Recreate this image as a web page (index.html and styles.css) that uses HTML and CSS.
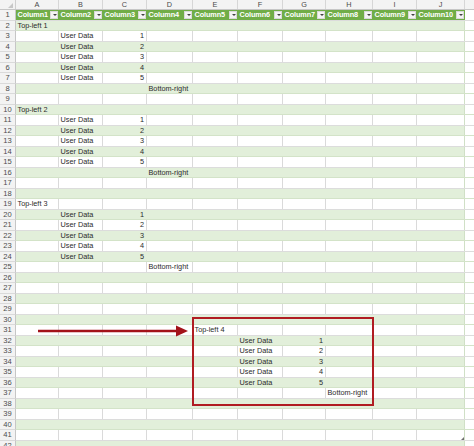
FILE: index.html
```html
<!DOCTYPE html>
<html>
<head>
<meta charset="utf-8">
<link rel="stylesheet" href="styles.css">
</head>
<body>
<div class="sheet">
  <div class="colhead">
    <div class="corner"><span class="tri"></span></div>
    <div class="ch">A</div><div class="ch">B</div><div class="ch">C</div><div class="ch">D</div><div class="ch">E</div>
    <div class="ch">F</div><div class="ch">G</div><div class="ch">H</div><div class="ch">I</div><div class="ch">J</div>
    <div class="ch last"></div>
  </div>
  <div class="row thead">
    <div class="rh">1</div>
    <div class="th"><span>Column1</span><span class="dd"></span></div>
    <div class="th"><span>Column2</span><span class="dd"></span></div>
    <div class="th"><span>Column3</span><span class="dd"></span></div>
    <div class="th"><span>Column4</span><span class="dd"></span></div>
    <div class="th"><span>Column5</span><span class="dd"></span></div>
    <div class="th"><span>Column6</span><span class="dd"></span></div>
    <div class="th"><span>Column7</span><span class="dd"></span></div>
    <div class="th"><span>Column8</span><span class="dd"></span></div>
    <div class="th"><span>Column9</span><span class="dd"></span></div>
    <div class="th"><span>Column10</span><span class="dd"></span></div>
  </div>
  <div class="row band"><div class="rh">2</div><div class="t a">Top-left 1</div></div>
  <div class="row"><div class="rh">3</div><div class="t b">User Data</div><div class="n c">1</div></div>
  <div class="row band"><div class="rh">4</div><div class="t b">User Data</div><div class="n c">2</div></div>
  <div class="row"><div class="rh">5</div><div class="t b">User Data</div><div class="n c">3</div></div>
  <div class="row band"><div class="rh">6</div><div class="t b">User Data</div><div class="n c">4</div></div>
  <div class="row"><div class="rh">7</div><div class="t b">User Data</div><div class="n c">5</div></div>
  <div class="row band"><div class="rh">8</div><div class="t d">Bottom-right</div></div>
  <div class="row"><div class="rh">9</div></div>
  <div class="row band"><div class="rh">10</div><div class="t a">Top-left 2</div></div>
  <div class="row"><div class="rh">11</div><div class="t b">User Data</div><div class="n c">1</div></div>
  <div class="row band"><div class="rh">12</div><div class="t b">User Data</div><div class="n c">2</div></div>
  <div class="row"><div class="rh">13</div><div class="t b">User Data</div><div class="n c">3</div></div>
  <div class="row band"><div class="rh">14</div><div class="t b">User Data</div><div class="n c">4</div></div>
  <div class="row"><div class="rh">15</div><div class="t b">User Data</div><div class="n c">5</div></div>
  <div class="row band"><div class="rh">16</div><div class="t d">Bottom-right</div></div>
  <div class="row"><div class="rh">17</div></div>
  <div class="row band"><div class="rh">18</div></div>
  <div class="row"><div class="rh">19</div><div class="t a">Top-left 3</div></div>
  <div class="row band"><div class="rh">20</div><div class="t b">User Data</div><div class="n c">1</div></div>
  <div class="row"><div class="rh">21</div><div class="t b">User Data</div><div class="n c">2</div></div>
  <div class="row band"><div class="rh">22</div><div class="t b">User Data</div><div class="n c">3</div></div>
  <div class="row"><div class="rh">23</div><div class="t b">User Data</div><div class="n c">4</div></div>
  <div class="row band"><div class="rh">24</div><div class="t b">User Data</div><div class="n c">5</div></div>
  <div class="row"><div class="rh">25</div><div class="t d">Bottom-right</div></div>
  <div class="row band"><div class="rh">26</div></div>
  <div class="row"><div class="rh">27</div></div>
  <div class="row band"><div class="rh">28</div></div>
  <div class="row"><div class="rh">29</div></div>
  <div class="row band"><div class="rh">30</div></div>
  <div class="row"><div class="rh">31</div><div class="t e">Top-left 4</div></div>
  <div class="row band"><div class="rh">32</div><div class="t f">User Data</div><div class="n g">1</div></div>
  <div class="row"><div class="rh">33</div><div class="t f">User Data</div><div class="n g">2</div></div>
  <div class="row band"><div class="rh">34</div><div class="t f">User Data</div><div class="n g">3</div></div>
  <div class="row"><div class="rh">35</div><div class="t f">User Data</div><div class="n g">4</div></div>
  <div class="row band"><div class="rh">36</div><div class="t f">User Data</div><div class="n g">5</div></div>
  <div class="row"><div class="rh">37</div><div class="t h">Bottom-right</div></div>
  <div class="row band"><div class="rh">38</div></div>
  <div class="row"><div class="rh">39</div></div>
  <div class="row band"><div class="rh">40</div></div>
  <div class="row"><div class="rh">41</div><div class="grip"></div></div>
  <div class="row band"><div class="rh">42</div></div>

  <svg class="arrow" width="160" height="16" viewBox="0 0 160 16">
    <line x1="2" y1="7" x2="142" y2="7" stroke="#a3121a" stroke-width="2.6"/>
    <polygon points="140,1.5 152,7 140,12.5" fill="#a3121a"/>
  </svg>
  <div class="redbox"></div>
</div>
</body>
</html>
```

FILE: styles.css
```css
html, body {
  margin: 0;
  padding: 0;
  background: #ffffff;
  overflow: hidden;
}
body {
  width: 474px;
  height: 446px;
  font-family: "Liberation Sans", Arial, sans-serif;
  font-size: 7.3px;
  color: #2b2b2b;
}
.sheet {
  position: relative;
  display: flex;
  flex-direction: column;
}
.colhead,
.row {
  display: grid;
  grid-template-columns: 16px 43px 44px 44px 46px 45px 45px 43px 47px 44px 48px 1fr;
}
.colhead {
  height: 10px;
  background: #f3f3f3;
  border-bottom: 1px solid #c6c6c6;
  box-sizing: border-box;
}
.corner {
  position: relative;
  border-right: 1px solid #cfcfcf;
}
.tri {
  position: absolute;
  right: 2px;
  bottom: 1px;
  width: 0;
  height: 0;
  border-left: 5px solid transparent;
  border-bottom: 5px solid #c7c7c7;
}
.ch {
  text-align: center;
  line-height: 9px;
  font-size: 7.3px;
  color: #4a4a4a;
  border-right: 1px solid #d6d6d6;
}
.ch.last { border-right: none; }
.row {
  height: 10.5px;
  box-sizing: border-box;
  border-bottom: 1px solid #dcdcdc;
  line-height: 9.5px;
  background-image: linear-gradient(to right,
    transparent 58px, #dadada 58px 59px,
    transparent 59px 102px, #dadada 102px 103px,
    transparent 103px 146px, #dadada 146px 147px,
    transparent 147px 192px, #dadada 192px 193px,
    transparent 193px 237px, #dadada 237px 238px,
    transparent 238px 282px, #dadada 282px 283px,
    transparent 283px 325px, #dadada 325px 326px,
    transparent 326px 372px, #dadada 372px 373px,
    transparent 373px 416px, #dadada 416px 417px,
    transparent 417px 464px, #d0e0c6 464px 465px,
    transparent 465px);
}
.row.band {
  background-image: linear-gradient(to right,
    transparent 16px, #e2efda 16px 464px, #d0e0c6 464px 465px, transparent 465px);
  border-bottom-color: #d3e3c8;
}
.rh {
  grid-column: 1;
  background: #f3f3f3;
  color: #4d4d4d;
  text-align: center;
  font-size: 7.6px;
  border-right: 1px solid #c6c6c6;
  margin-bottom: -1px;
  border-bottom: 1px solid #dadada;
}
.th {
  display: flex;
  justify-content: space-between;
  align-items: center;
  background: #70ad47;
  color: #ffffff;
  font-weight: bold;
  padding-left: 1.5px;
  padding-right: 1px;
  white-space: nowrap;
  letter-spacing: -0.1px;
}
.dd {
  position: relative;
  width: 8px;
  height: 8px;
  flex: none;
  background: #f4f4f4;
  box-sizing: border-box;
  border: 1px solid #d9d9d9;
}
.dd::after {
  content: "";
  position: absolute;
  left: 1.5px;
  top: 2.5px;
  border-left: 2px solid transparent;
  border-right: 2px solid transparent;
  border-top: 2px solid #404040;
}
.t {
  white-space: nowrap;
  padding-left: 1.5px;
  overflow: visible;
}
.n {
  text-align: right;
  padding-right: 3px;
}
.a { grid-column: 2; }
.b { grid-column: 3; }
.c { grid-column: 4; }
.d { grid-column: 5; }
.e { grid-column: 6; }
.f { grid-column: 7; }
.g { grid-column: 8; }
.h { grid-column: 9; }
.grip {
  grid-column: 11;
  justify-self: end;
  align-self: end;
  width: 0;
  height: 0;
  margin-right: 1px;
  border-left: 3px solid transparent;
  border-bottom: 3px solid #6f6f6f;
}
.arrow {
  position: absolute;
  left: 36px;
  top: 324px;
}
.redbox {
  position: absolute;
  left: 192px;
  top: 317px;
  width: 182px;
  height: 89px;
  box-sizing: border-box;
  border: 2px solid #b01c22;
}
```
